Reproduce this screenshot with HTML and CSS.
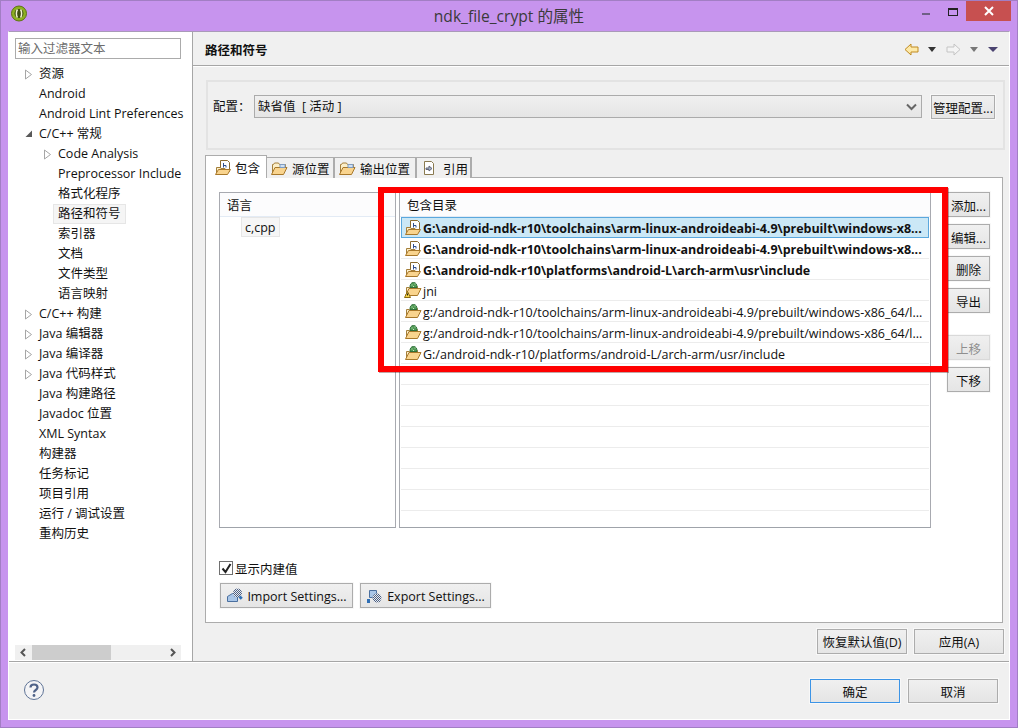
FILE: index.html
```html
<!DOCTYPE html>
<html lang="zh">
<head>
<meta charset="utf-8">
<title>ndk_file_crypt 的属性</title>
<link rel="stylesheet" href="styles.css">
</head>
<body>
<svg class="defs" width="0" height="0">
  <defs>
    <symbol id="fold" viewBox="0 0 18 16">
      <path d="M2.500 13.500V4.500h1l1-1.500h4l1 1.500h6v3" fill="#fbeec8" stroke="#a57f3a"/>
      <path d="M1.500 14.500l3.500-7h12l-3.500 7z" fill="#f9d48e" stroke="#a8782a"/>
      <path d="M10 4.500h5v3h-5z" fill="#cfe0f2" stroke="#7f9cc2"/>
    </symbol>
    <symbol id="inc" viewBox="0 0 18 17">
      <path d="M6.500 1.500h7l2 2v9h-9z" fill="#fff" stroke="#8a6a30"/>
      <path d="M9.500 4v4.500M9.500 6.500h2.500v2" fill="none" stroke="#2f4f8f"/>
      <path d="M2.500 14.500V8.500h3.500l1 1h4v2" fill="#fbeec8" stroke="#a57f3a"/>
      <path d="M1.500 15.500l3-5h12l-3 5z" fill="#f9d48e" stroke="#a8782a"/>
    </symbol>
    <symbol id="gfold" viewBox="0 0 18 16">
      <path d="M2.500 13.500V6.500h3l1-1h7v2" fill="#fbeec8" stroke="#a57f3a"/>
      <path d="M6 6.500c0-3 1-5 3.500-5s3.500 2 3.500 5z" fill="#4f9a55" stroke="#2f6f3a"/>
      <path d="M7.500 4h1M10.500 3h1M9 5.500h1" stroke="#cfe8c0"/>
      <path d="M1.500 14.500l3.500-7h12l-3.500 7z" fill="#f9d48e" stroke="#a8782a"/>
    </symbol>
    <symbol id="closed" viewBox="0 0 9 11">
      <path d="M1.500 1l6 4.500-6 4.500z" fill="#fff" stroke="#a6a6a6"/>
    </symbol>
    <symbol id="open" viewBox="0 0 9 9">
      <path d="M8 1.500v6.500H1.500z" fill="#595959"/>
    </symbol>
    <pattern id="hatch" width="2" height="2" patternUnits="userSpaceOnUse">
      <rect width="2" height="2" fill="#e8ecf3"/>
      <rect width="1" height="1" fill="#4d5f80"/>
      <rect x="1" y="1" width="1" height="1" fill="#4d5f80"/>
    </pattern>
  </defs>
</svg>
<div class="window">
  <header class="titlebar">
    <svg class="app-icon" width="18" height="18" viewBox="0 0 18 18">
      <circle cx="9" cy="8.500" r="7.500" fill="#8db021" stroke="#5c7412"/>
      <circle cx="9" cy="8.500" r="4.500" fill="#3f4f10"/>
      <path d="M7.500 4.500c-1.500 2-1.500 6 0 8M10.500 4.500c1.500 2 1.500 6 0 8" fill="none" stroke="#f3f5d0" stroke-width="1.500"/>
    </svg>
    <h1 class="title">ndk_file_crypt 的属性</h1>
    <div class="win-controls">
      <span class="win-min"></span>
      <span class="win-max"></span>
      <span class="win-close">
        <svg width="10" height="10" viewBox="0 0 10 10"><path d="M1 1l8 8M9 1l-8 8" stroke="#fff" stroke-width="2"/></svg>
      </span>
    </div>
  </header>
  <div class="client">
    <div class="main">
      <aside class="sidebar">
        <div class="filter">输入过滤器文本</div>
        <div class="tree">
          <div class="node l1"><svg class="tw" width="9" height="11"><use href="#closed"/></svg>资源</div>
          <div class="node l1">Android</div>
          <div class="node l1">Android Lint Preferences</div>
          <div class="node l1"><svg class="tw" width="9" height="9"><use href="#open"/></svg>C/C++ 常规</div>
          <div class="node l2"><svg class="tw" width="9" height="11"><use href="#closed"/></svg>Code Analysis</div>
          <div class="node l2">Preprocessor Include</div>
          <div class="node l2">格式化程序</div>
          <div class="node l2"><span class="sel-node">路径和符号</span></div>
          <div class="node l2">索引器</div>
          <div class="node l2">文档</div>
          <div class="node l2">文件类型</div>
          <div class="node l2">语言映射</div>
          <div class="node l1"><svg class="tw" width="9" height="11"><use href="#closed"/></svg>C/C++ 构建</div>
          <div class="node l1"><svg class="tw" width="9" height="11"><use href="#closed"/></svg>Java 编辑器</div>
          <div class="node l1"><svg class="tw" width="9" height="11"><use href="#closed"/></svg>Java 编译器</div>
          <div class="node l1"><svg class="tw" width="9" height="11"><use href="#closed"/></svg>Java 代码样式</div>
          <div class="node l1">Java 构建路径</div>
          <div class="node l1">Javadoc 位置</div>
          <div class="node l1">XML Syntax</div>
          <div class="node l1">构建器</div>
          <div class="node l1">任务标记</div>
          <div class="node l1">项目引用</div>
          <div class="node l1">运行 / 调试设置</div>
          <div class="node l1">重构历史</div>
        </div>
        <div class="hscroll">
          <svg width="17" height="15" viewBox="0 0 17 15"><path d="M10 4l-3.500 3.500L10 11" fill="none" stroke="#555" stroke-width="2"/></svg>
          <span class="track"><span class="thumb"></span></span>
          <svg width="17" height="15" viewBox="0 0 17 15"><path d="M7 4l3.500 3.500L7 11" fill="none" stroke="#555" stroke-width="2"/></svg>
        </div>
      </aside>
      <section class="panel">
        <div class="panel-head">
          <h2 class="panel-title">路径和符号</h2>
          <div class="nav">
            <svg width="15" height="13" viewBox="0 0 15 13"><path d="M7 1L1 6.500 7 12V9h7V4H7z" fill="#fde9a8" stroke="#c08a20"/></svg>
            <span class="drop dark"></span>
            <svg class="nav-fwd" width="15" height="13" viewBox="0 0 15 13"><path d="M8 1l6 5.500L8 12V9H1V4h7z" fill="#f4f4f4" stroke="#c4c4c4"/></svg>
            <span class="drop grey"></span>
            <span class="drop navy"></span>
          </div>
        </div>
        <div class="panel-body">
          <div class="config">
            <label class="config-label">配置：</label>
            <div class="select"><span>缺省值&nbsp; [ 活动 ]</span>
              <svg width="11" height="8" viewBox="0 0 11 8"><path d="M1 1.500l4.500 4.500L10 1.500" fill="none" stroke="#666" stroke-width="2"/></svg>
            </div>
            <button class="btn manage">管理配置...</button>
          </div>
          <div class="tabs">
            <div class="tab active"><svg width="18" height="17"><use href="#inc"/></svg>包含</div>
            <div class="tab t2"><svg width="18" height="16"><use href="#fold"/></svg>源位置</div>
            <div class="tab t3"><svg width="18" height="16"><use href="#fold"/></svg>输出位置</div>
            <div class="tab t4"><svg width="14" height="16" viewBox="0 0 14 16"><path d="M2.500 1.500h7l2 2v11h-9z" fill="#fff" stroke="#8a7a50"/><path d="M4 8h3V6l3 2.500L7 11V9.500H4z" fill="#9fb4cf" stroke="#667"/></svg>引用</div>
          </div>
          <div class="pane">
            <div class="tables">
              <div class="table lang">
                <div class="thead">语言</div>
                <div class="lang-row"><span class="lang-item">c,cpp</span></div>
              </div>
              <div class="table dirs">
                <div class="thead">包含目录</div>
                <div class="row sys selected"><svg width="18" height="17"><use href="#inc"/></svg>G:\android-ndk-r10\toolchains\arm-linux-androideabi-4.9\prebuilt\windows-x8...</div>
                <div class="row sys"><svg width="18" height="17"><use href="#inc"/></svg>G:\android-ndk-r10\toolchains\arm-linux-androideabi-4.9\prebuilt\windows-x8...</div>
                <div class="row sys"><svg width="18" height="17"><use href="#inc"/></svg>G:\android-ndk-r10\platforms\android-L\arch-arm\usr\include</div>
                <div class="row"><svg width="18" height="18" viewBox="0 0 18 18"><use href="#gfold" width="18" height="16"/><path d="M3.500 10.500l3 6h-6z" fill="#f7d64a" stroke="#8a6a10"/><path d="M3.500 12.500v2" stroke="#222"/></svg>jni</div>
                <div class="row"><svg width="18" height="16"><use href="#gfold"/></svg>g:/android-ndk-r10/toolchains/arm-linux-androideabi-4.9/prebuilt/windows-x86_64/l...</div>
                <div class="row"><svg width="18" height="16"><use href="#gfold"/></svg>g:/android-ndk-r10/toolchains/arm-linux-androideabi-4.9/prebuilt/windows-x86_64/l...</div>
                <div class="row"><svg width="18" height="16"><use href="#gfold"/></svg>G:/android-ndk-r10/platforms/android-L/arch-arm/usr/include</div>
                <div class="row"></div>
                <div class="row"></div>
                <div class="row"></div>
                <div class="row"></div>
                <div class="row"></div>
                <div class="row"></div>
                <div class="row"></div>
              </div>
              <div class="side-btns">
                <button class="btn sb">添加...</button>
                <button class="btn sb">编辑...</button>
                <button class="btn sb">删除</button>
                <button class="btn sb">导出</button>
                <button class="btn sb up" disabled>上移</button>
                <button class="btn sb">下移</button>
              </div>
            </div>
            <div class="builtin"><span class="check"><svg width="11" height="11" viewBox="0 0 11 11"><path d="M1.500 5.500l3 3.500 5-8" fill="none" stroke="#222" stroke-width="2"/></svg></span>显示内建值</div>
            <div class="io">
              <button class="btn imp"><svg width="18" height="16" viewBox="0 0 18 16"><path d="M1.500 8.500l5-3h5v8h-10z" fill="#a9c6e8" stroke="#4a6f9f"/><circle cx="11.500" cy="5" r="4.500" fill="url(#hatch)"/><path d="M13 12h4v3.500h-4z" fill="#2f6fb5" transform="rotate(45 15 13.500) scale(.8)"/></svg>Import Settings...</button>
              <button class="btn exp"><svg width="18" height="16" viewBox="0 0 18 16"><path d="M3.500 2.500h7v7h-7z" fill="#a9c6e8" stroke="#4a6f9f"/><circle cx="11" cy="10" r="4.500" fill="url(#hatch)"/><path d="M1 11h3v4H1z" fill="#2f6fb5"/></svg>Export Settings...</button>
            </div>
          </div>
          <div class="restore">
            <button class="btn wide">恢复默认值(D)</button>
            <button class="btn wide">应用(A)</button>
          </div>
        </div>
      </section>
    </div>
    <footer class="footer">
      <svg class="help" width="22" height="22" viewBox="0 0 22 22"><circle cx="11" cy="11" r="9.500" fill="#f4f4f6" stroke="#5f7497"/><path d="M7.500 8.500c0-2 1.500-3 3.500-3s3.500 1 3.500 3c0 2.500-3.500 2.500-3.500 5" fill="none" stroke="#4f6288" stroke-width="2.200"/><circle cx="11" cy="16.500" r="1.400" fill="#4f6288"/></svg>
      <div class="footer-btns">
        <button class="btn wide default">确定</button>
        <button class="btn wide">取消</button>
      </div>
    </footer>
    <div class="callout"></div>
  </div>
</div>
</body>
</html>
```
FILE: styles.css
```css
* { box-sizing: border-box; }
html, body { margin: 0; padding: 0; }
body { font-family: "Open Sans", "Noto Sans CJK SC", sans-serif; font-size: 12.5px; color: #111; }
.defs { position: absolute; }
.window { width: 1018px; height: 728px; background: #c794ee; border: 1px solid #a27ec4; padding: 0 7px 7px; display: flex; flex-direction: column; }
.titlebar { height: 30px; flex: none; display: flex; align-items: center; position: relative; }
.app-icon { margin: 0 0 5px 2px; }
.title { position: absolute; left: 0; right: 0; top: 5px; margin: 0; text-align: center; font-size: 15.6px; font-weight: 400; color: #3a3a3a; line-height: 20px; }
.win-controls { margin-left: auto; display: flex; align-items: flex-start; align-self: flex-start; }
.win-min { width: 8px; height: 2px; background: #6f5f86; margin: 12px 18px 0 0; }
.win-max { width: 10px; height: 8px; border: 1px solid #222; border-top-width: 2px; margin: 7px 8px 0 0; }
.win-close { width: 45px; height: 20px; background: #c75050; display: flex; align-items: center; justify-content: center; margin-right: -1px; }
.client { flex: 1; background: #f0f0f0; border: 1px solid #fff; border-top-color: #a99ab8; display: flex; flex-direction: column; position: relative; }
.main { height: 630px; flex: none; display: flex; border-bottom: 1px solid #a6a6a6; }
.sidebar { width: 184px; flex: none; background: #fff; border-right: 1px solid #a6a6a6; padding: 6px 0 0 6px; display: flex; flex-direction: column; position: relative; }
.filter { width: 166px; height: 21px; border: 1px solid #ababab; color: #6d6d6d; padding-left: 2px; line-height: 19px; flex: none; }
.tree { padding-top: 5px; flex: 1; }
.node { display: flow-root; height: 20px; line-height: 20px; white-space: nowrap; position: relative; }
.l1 { padding-left: 24px; }
.l2 { padding-left: 43px; }
.tw { position: absolute; top: 5px; }
.l1 .tw { left: 9px; }
.l2 .tw { left: 28px; }
.sel-node { display: block; width: fit-content; background: #f5f5f5; outline: 1px solid #e6e6e6; padding: 0 4px; margin: 1px 0 0 -4px; height: 18px; line-height: 18px; }
.hscroll { width: 166px; height: 15px; background: #f0f0f0; display: flex; align-items: center; flex: none; margin-bottom: 1px; }
.track { flex: 1; height: 15px; }
.thumb { display: block; width: 79px; height: 15px; background: #cdcdcd; }
.panel { flex: 1; display: flex; flex-direction: column; min-width: 0; }
.panel-head { height: 34px; flex: none; border-bottom: 1px solid #a6a6a6; display: flex; align-items: center; padding: 2px 11px 0 12px; box-shadow: 0 1px 0 #fff; }
.panel-title { margin: 0; font-size: 12.5px; font-weight: 700; }
.nav { margin-left: auto; display: flex; align-items: center; }
.drop { width: 0; height: 0; border: 4px solid transparent; border-bottom-width: 0; border-top-width: 5px; border-top-color: #333; margin-left: 9px; }
.drop.grey { border-top-color: #777; margin-left: 9px; }
.drop.navy { border-top-color: #4a4370; margin-left: 10px; width: 0; border-left-width: 5px; border-right-width: 5px; }
.nav-fwd { margin-left: 10px; }
.panel-body { padding: 14px 5px 0 13px; flex: 1; display: flex; flex-direction: column; }
.config { height: 70px; width: 799px; flex: none; border: 2px solid #e3e3e3; padding: 13px 7px 0 5px; display: flex; align-items: flex-start; }
.config-label { width: 41px; line-height: 23px; }
.select { width: 668px; height: 23px; border: 1px solid #ababab; background: linear-gradient(#f0f0f0, #e5e5e5); line-height: 21px; padding: 0 4px 0 3px; display: flex; align-items: center; justify-content: space-between; }
.btn { font: inherit; color: #111; background: linear-gradient(#f0f0f0, #e5e5e5); border: 1px solid #acacac; padding: 0; height: 25px; outline: 1px solid #f8f8f8; display: inline-flex; align-items: center; justify-content: center; }
.manage { width: 64px; margin-left: 9px; height: 24px; }
.tabs { display: flex; align-items: flex-end; height: 24px; flex: none; margin: 4px 0 -1px -1px; position: relative; z-index: 1; }
.tab { height: 21px; border: 1px solid #acacac; background: #f0f0f0; display: flex; align-items: center; gap: 4px; padding-left: 3px; margin-left: -1px; border-width: 1px 2px 0 1px; }
.tab:first-child { margin-left: 0; }
.tab.active { height: 23px; width: 62px; background: #fff; border-width: 1px 1px 0 1px; padding-left: 8px; gap: 3px; }
.t2 { width: 69px; }
.t3 { width: 83px; }
.t4 { width: 56px; padding-left: 5px; gap: 7px; }
.pane { width: 798px; height: 446px; flex: none; margin-left: -1px; background: #fff; border: 1px solid #acacac; padding: 14px 0 0 13px; }
.tables { display: flex; height: 336px; }
.table { border: 1px solid #a8aab0; border-bottom-color: #9fa3aa; background: #fff; overflow: hidden; }
.lang { width: 177px; }
.dirs { width: 532px; margin-left: 3px; }
.thead { height: 24px; line-height: 24px; padding: 1px 0 0 7px; border-bottom: 1px solid #e3ebf5; background: #fcfcfd; }
.lang-row { display: flex; padding: 0 0 0 21px; }
.lang-item { background: #f6f6f6; border: 1px solid #e6e6e6; height: 20px; line-height: 18px; padding: 1px 3px 0; }
.row { height: 21px; border-bottom: 1px solid #ececec; display: flex; align-items: center; gap: 1px; padding: 2px 0 0 3px; white-space: nowrap; margin: 0 1px; }
.row > svg { margin-top: -2px; flex: none; }
.row.sys { font-weight: 700; letter-spacing: -0.03px; }
.row.selected { background: #cbe8f6; border: 1px solid #5ba8dd; padding-left: 2px; }
.side-btns { width: 43px; margin-left: 16px; display: flex; flex-direction: column; gap: 7px; }
.sb { width: 43px; flex: none; padding-top: 2px; }
.up { margin-top: 15px; color: #8f8f8f; border-color: #d9d9d9; }
.builtin { margin: 32px 0 0 0; display: flex; align-items: center; gap: 2px; height: 16px; }
.check { width: 14px; height: 14px; border: 1px solid #707070; display: flex; align-items: center; justify-content: center; background: #fff; }
.io { display: flex; gap: 7px; margin: 7px 0 0 1px; }
.imp { width: 133px; gap: 3px; height: 25px; padding-top: 2px; }
.exp { width: 131px; gap: 3px; height: 25px; padding-top: 2px; }
.imp svg, .exp svg { margin-top: -2px; }
.restore { display: flex; justify-content: flex-end; gap: 7px; margin-top: 6px; }
.wide { width: 90px; }
.footer { flex: 1; display: flex; align-items: flex-start; padding: 16px 11px 0 14px; border-top: 1px solid #fff; }
.footer-btns { margin-left: auto; display: flex; gap: 8px; }
.footer-btns .wide { height: 24px; }
.default { border-color: #3c94e6; }
.callout { position: absolute; left: 369px; top: 155px; width: 570px; height: 185px; border: 6px solid #f00; box-shadow: 1px 1px 0 rgba(80,0,0,.35); pointer-events: none; }
```
